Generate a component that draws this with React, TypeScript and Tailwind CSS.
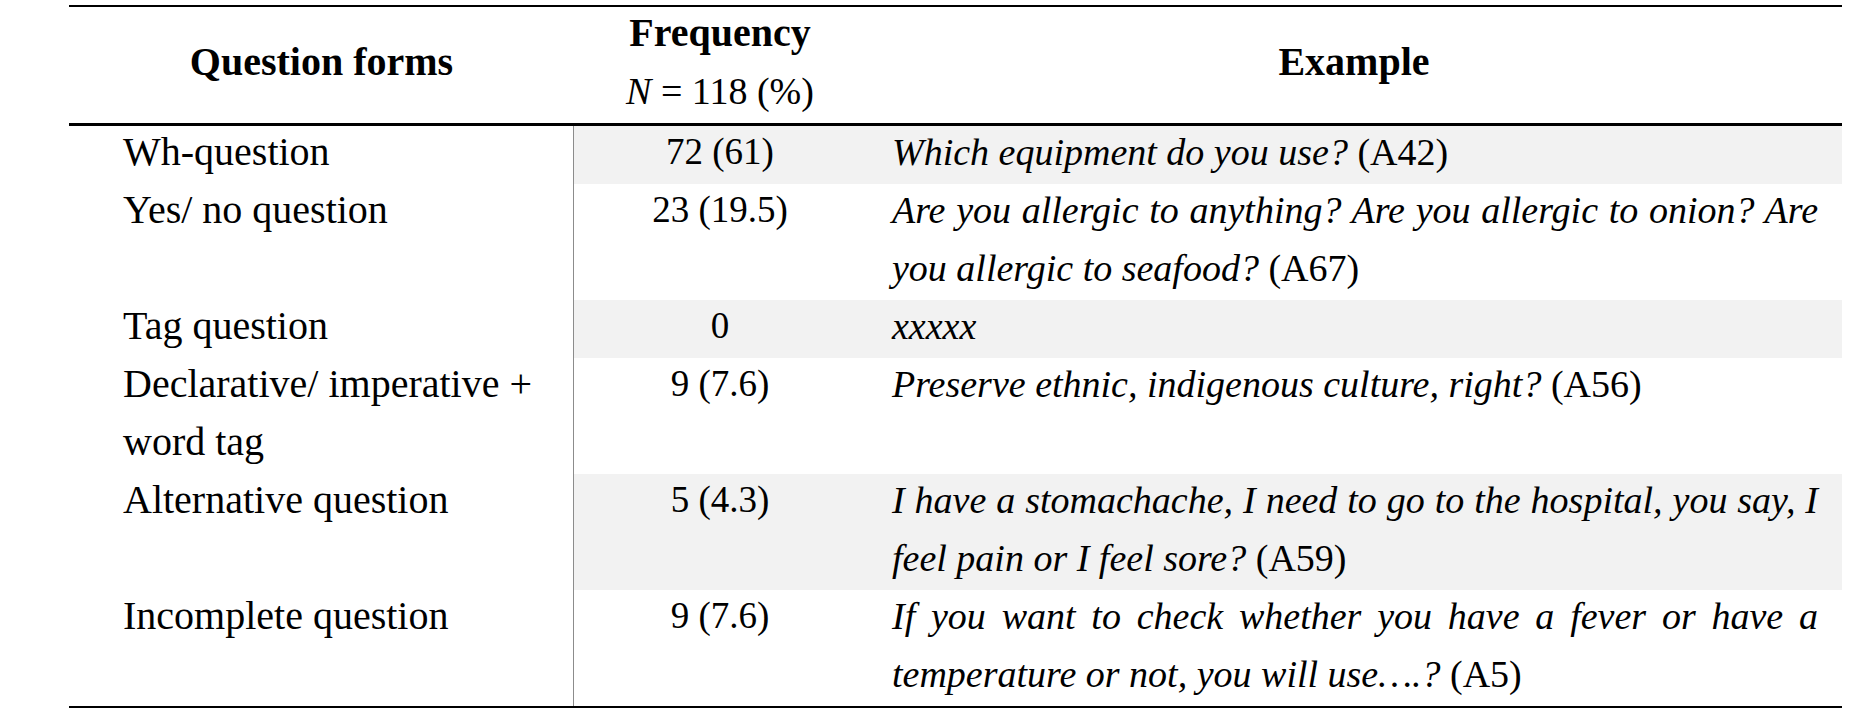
import React from 'react';

type Piece = { t: string; it?: boolean };
type Row = { form: string[]; freq: string; lines: Piece[][]; gray?: boolean };

const rows: Row[] = [
  {
    form: ['Wh-question'],
    freq: '72 (61)',
    gray: true,
    lines: [[{ t: 'Which equipment do you use?', it: true }, { t: ' (A42)' }]],
  },
  {
    form: ['Yes/ no question'],
    freq: '23 (19.5)',
    lines: [
      [{ t: 'Are you allergic to anything? Are you allergic to onion? Are', it: true }],
      [{ t: 'you allergic to seafood?', it: true }, { t: ' (A67)' }],
    ],
  },
  {
    form: ['Tag question'],
    freq: '0',
    gray: true,
    lines: [[{ t: 'xxxxx', it: true }]],
  },
  {
    form: ['Declarative/ imperative +', 'word tag'],
    freq: '9 (7.6)',
    lines: [[{ t: 'Preserve ethnic, indigenous culture, right?', it: true }, { t: ' (A56)' }]],
  },
  {
    form: ['Alternative question'],
    freq: '5 (4.3)',
    gray: true,
    lines: [
      [{ t: 'I have a stomachache, I need to go to the hospital, you say, I', it: true }],
      [{ t: 'feel pain or I feel sore?', it: true }, { t: ' (A59)' }],
    ],
  },
  {
    form: ['Incomplete question'],
    freq: '9 (7.6)',
    lines: [
      [{ t: 'If you want to check whether you have a fever or have a', it: true }],
      [{ t: 'temperature or not, you will use….?', it: true }, { t: ' (A5)' }],
    ],
  },
];

const TableRow = ({ row }: { row: Row }) => (
  <div className="flex">
    <div className="w-[504px] pl-[54px]">
      <div className="-translate-y-[3px]">
        {row.form.map((f) => (
          <div key={f}>{f}</div>
        ))}
      </div>
    </div>
    <div className={`flex flex-1 border-l border-[#8c8c8c] ${row.gray ? 'bg-[#f2f2f2]' : ''}`}>
      <div className="w-[292px] text-center text-[37px]">
        <div className="-translate-y-[3px]">{row.freq}</div>
      </div>
      <div className="flex-1 pl-[26px] pr-[24px]">
        <div className="-translate-y-[3px]">
          {row.lines.map((line, i) => (
            <div
              key={i}
              className={i < row.lines.length - 1 ? 'text-justify [text-align-last:justify]' : ''}
            >
              {line.map((p, j) =>
                p.it ? (
                  <span key={j} className="italic text-[38px]">
                    {p.t}
                  </span>
                ) : (
                  <span key={j} className="text-[38px]">{p.t}</span>
                )
              )}
            </div>
          ))}
        </div>
      </div>
    </div>
  </div>
);

export default function App() {
  return (
    <div className="w-[1860px] h-[709px] bg-white overflow-hidden font-['Liberation_Serif',serif] text-[40px] leading-[58px] text-black">
      <div className="ml-[69px] mt-[5px] w-[1773px] border-t-2 border-b-2 border-black">
        {/* header */}
        <div className="flex h-[119px] border-b-[3px] border-black font-bold">
          <div className="w-[505px] flex items-center justify-center">
            <span className="-translate-y-[3px]">Question forms</span>
          </div>
          <div className="w-[292px] text-center">
            <div className="-translate-y-[3px]">
              <div>Frequency</div>
              <div className="font-normal text-[38px]">
                <span className="italic">N</span> = 118 (%)
              </div>
            </div>
          </div>
          <div className="flex-1 flex items-center justify-center">
            <span className="-translate-y-[3px]">Example</span>
          </div>
        </div>

        {rows.map((r) => (
          <TableRow key={r.form[0]} row={r} />
        ))}
      </div>
    </div>
  );
}
